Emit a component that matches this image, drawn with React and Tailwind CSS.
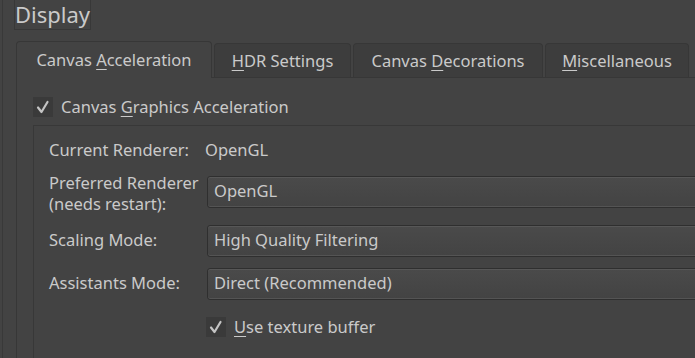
import React from 'react';

function Check() {
  return (
    <span className="flex h-[20px] w-[20px] shrink-0 items-center justify-center bg-[#3a3a3a]">
      <svg width="20" height="20" viewBox="0 0 20 20">
        <polyline
          points="5,10.5 8.5,15 14.5,5"
          fill="none"
          stroke="#c4c4c4"
          strokeWidth="2.2"
          strokeLinejoin="round"
          strokeLinecap="round"
        />
      </svg>
    </span>
  );
}

function Mn({ children }) {
  return <span className="underline decoration-1 underline-offset-[3px]">{children}</span>;
}

function Combo({ children }) {
  return (
    <div className="flex h-[32px] flex-1 items-center rounded-[3px] border border-[#2f2f2f] bg-gradient-to-b from-[#4a4a4a] to-[#434343] pl-[6px] shadow-[inset_0_1px_0_#575757,inset_0_-1px_0_#545454]">
      <span>{children}</span>
    </div>
  );
}

function Tab({ children, active, w }) {
  if (active) {
    return (
      <div className={`relative z-10 -mb-px flex h-[37px] items-center justify-center rounded-t-[4px] border border-b-0 border-[#373737] bg-[#434343] ${w}`}>
        <span>{children}</span>
      </div>
    );
  }
  return (
    <div className={`flex h-[34px] items-center justify-center rounded-t-[4px] border border-b-0 border-[#373737] bg-[#3d3d3d] pt-[2px] ${w}`}>
      <span>{children}</span>
    </div>
  );
}

export default function App() {
  return (
    <div
      className="h-[358px] w-[695px] overflow-hidden bg-[#434343] text-[16.5px] text-[#cacaca]"
      style={{ fontFamily: '"Noto Sans", "Open Sans", sans-serif' }}
    >
      <div className="ml-[2px] h-full w-[800px] border-l border-[#393939] pl-[11px]">
        <div className="h-[30px] w-[77px] border-x border-b border-[#383838] text-[22px] leading-[28px]">
          Display
        </div>

        <div className="ml-[2px] mt-[11px]">
          <div className="flex items-end gap-[2px] border-b border-[#373737]">
            <Tab active w="w-[196px]">
              Canvas <Mn>A</Mn>cceleration
            </Tab>
            <Tab w="w-[137px]">
              <Mn>H</Mn>DR Settings
            </Tab>
            <Tab w="w-[190px]">
              Canvas <Mn>D</Mn>ecorations
            </Tab>
            <Tab w="w-[144px]">
              <Mn>M</Mn>iscellaneous
            </Tab>
          </div>

          <div className="h-[300px] border-l border-[#373737] pl-[16px] pt-[17px]">
            <div className="flex items-center gap-[8px]">
              <Check />
              <span>
                Canvas <Mn>G</Mn>raphics Acceleration
              </span>
            </div>

            <div className="mt-[5px] h-[260px] border border-[#383838] pl-[15px] pt-[13px]">
              <div className="flex h-[24px] items-center">
                <span className="w-[156px]">Current Renderer:</span>
                <span>OpenGL</span>
              </div>

              <div className="mt-[9px] flex items-start">
                <span className="w-[158px] leading-[21px]">
                  Preferred Renderer
                  <br />
                  (needs restart):
                </span>
                <div className="mt-[4px] flex flex-1">
                  <Combo>OpenGL</Combo>
                </div>
              </div>

              <div className="mt-[11px] flex items-center">
                <span className="w-[158px]">Scaling Mode:</span>
                <Combo>High Quality Filtering</Combo>
              </div>

              <div className="mt-[11px] flex items-center">
                <span className="w-[158px]">Assistants Mode:</span>
                <Combo>Direct (Recommended)</Combo>
              </div>

              <div className="ml-[157px] mt-[15px] flex items-center gap-[8px]">
                <Check />
                <span>
                  <Mn>U</Mn>se texture buffer
                </span>
              </div>
            </div>
          </div>
        </div>
      </div>
    </div>
  );
}
